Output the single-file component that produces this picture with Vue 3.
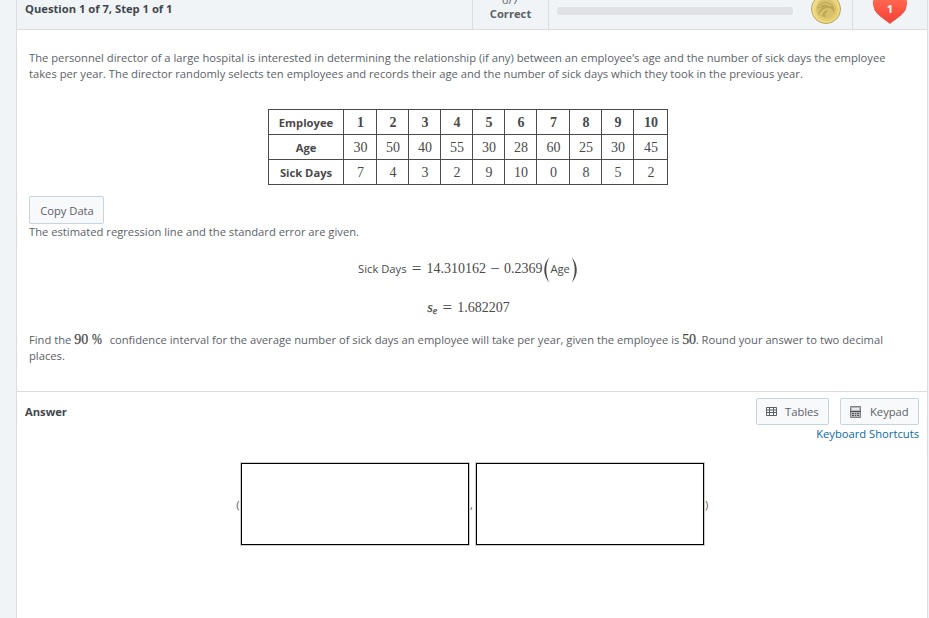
<template>
  <div class="page">
    <main class="panel">
      <header class="top-bar">
        <h1 class="step">Question 1 of 7, Step 1 of 1</h1>
        <div class="score">
          <span>0/7</span>
          <strong>Correct</strong>
        </div>
        <div class="progress">
          <div class="track"></div>
          <svg class="coin" width="32" height="32" viewBox="0 0 32 32">
            <defs>
              <linearGradient id="gold" x1="0" y1="0" x2="1" y2="1">
                <stop offset="0" stop-color="#f0dc96" />
                <stop offset="1" stop-color="#dfc45c" />
              </linearGradient>
            </defs>
            <circle cx="16" cy="16" r="14.5" fill="url(#gold)" stroke="#b7a565" />
            <circle cx="16" cy="16" r="12.9" fill="none" stroke="#f3e08a" stroke-width="1.3" />
            <circle cx="16" cy="15.8" r="10" fill="#d8c16c" />
            <path d="M7 16c2-7 9-9 14-5 3 2 4 5 3 9-1-3-3-5-6-5-5 0-8 4-10 8 0-4 2-7 5-9-2 0-4 1-6 2z" fill="#bda654" />
            <path d="M12 23c1-4 3-6 7-6-2 1-4 3-4 7z" fill="#bda654" />
            <path d="M9 14c3-4 8-4 12-1" fill="none" stroke="#e6d382" />
          </svg>
        </div>
        <div class="lives">
          <svg class="heart" width="36" height="34" viewBox="0 0 36 34">
            <defs>
              <linearGradient id="red" x1="0" y1="0" x2="0" y2="1">
                <stop offset="0" stop-color="#ff7658" />
                <stop offset=".65" stop-color="#fb5140" />
                <stop offset="1" stop-color="#ef3f35" />
              </linearGradient>
            </defs>
            <path d="M18 34C13 29 1 24 1 13 1 5 5 1 10 1c4 0 7 2 8 5 1-3 4-5 8-5 5 0 9 4 9 12 0 11-12 16-17 21z" fill="url(#red)" />
            <path d="M2.5 19c3 6 11 10 15.500 14 4.500-4 12.500-8 15.500-14" fill="none" stroke="#e8554a" />
          </svg>
          <span class="count">1</span>
        </div>
      </header>

      <section class="question">
        <p>The personnel director of a large hospital is interested in determining the relationship (if any) between an employee’s age and the number of sick days the employee<br>takes per year. The director randomly selects ten employees and records their age and the number of sick days which they took in the previous year.</p>

        <table>
          <colgroup>
            <col class="label-col">
            <col v-for="(w, i) in widths" :key="i" :style="{ width: w + 'px' }">
          </colgroup>
          <tbody>
            <tr v-for="(row, r) in rows" :key="row.label" :class="{ head: r === 0 }">
              <th>{{ row.label }}</th>
              <td v-for="(v, i) in row.values" :key="i">{{ v }}</td>
            </tr>
          </tbody>
        </table>

        <button class="btn copy">Copy Data</button>
        <p>The estimated regression line and the standard error are given.</p>

        <div class="equation first">
          <span class="word">Sick Days</span><span class="op">=</span><span>14.310162</span><span class="op minus">−</span><span>0.2369</span>
          <svg class="paren" width="7" height="26" viewBox="0 0 7 26"><path d="M6.500 .3C-.5 7-.5 19 6.500 25.700 2.200 19 2.200 7 6.500 .3z" /></svg>
          <span class="word">Age</span>
          <svg class="paren right" width="7" height="26" viewBox="0 0 7 26"><path d="M.5 .3C7.500 7 7.500 19 .5 25.700 4.800 19 4.800 7 .5 .3z" /></svg>
        </div>
        <div class="equation second">
          <i class="strong">s<sub>e</sub></i><span class="op">=</span><span>1.682207</span>
        </div>

        <p class="prompt">Find the <span class="math strong">90 <span class="percent">%</span></span>&nbsp; confidence interval for the average number of sick days an employee will take per year, given the employee is <span class="math strong fifty">50</span>. Round your answer to two decimal<br>places.</p>
      </section>

      <section class="answer">
        <div class="answer-head">
          <h2>Answer</h2>
          <div class="tools">
            <div class="buttons">
              <button class="btn tables">
                <svg width="11" height="9" viewBox="0 0 11 9">
                  <path d="M.5 .5h10v8H.5zM.5 3h10M.5 5.500h10M3.500 .5v8M7.500 .5v8" fill="none" stroke="#5b6167" />
                </svg>
                Tables
              </button>
              <button class="btn keypad">
                <svg width="11" height="12" viewBox="0 0 11 12">
                  <path d="M.5 .5h10v11H.5z" fill="#b4b8bb" stroke="#7c8185" />
                  <path d="M2 2h7v2H2z" fill="#e8eaec" />
                  <path d="M0 5.500h11M2 7.500h2M5 7.500h1M7 7.500h2M2 9.500h2M5 9.500h1M7 9.500h2" stroke="#4e5358" />
                </svg>
                Keypad
              </button>
            </div>
            <a class="shortcuts">Keyboard Shortcuts</a>
          </div>
        </div>
        <div class="interval">
          <span class="open">(</span>
          <div class="field"></div>
          <span class="comma">,</span>
          <div class="field"></div>
          <span class="close">)</span>
        </div>
      </section>
    </main>
  </div>
</template>

<script setup>
const widths = [33, 32, 32, 32, 32, 32, 33, 32, 32, 34]

const rows = [
  { label: 'Employee', values: [1, 2, 3, 4, 5, 6, 7, 8, 9, 10] },
  { label: 'Age', values: [30, 50, 40, 55, 30, 28, 60, 25, 30, 45] },
  { label: 'Sick Days', values: [7, 4, 3, 2, 9, 10, 0, 8, 5, 2] },
]
</script>

<style>
body{margin:0;overflow:hidden}
</style>

<style scoped>
.page{box-sizing:border-box;width:929px;height:618px;padding:0 1px 0 16px;background:#f0f4f7;font:11.21px/16px "Open Sans",sans-serif;color:#5b6167;overflow:hidden}
.panel{box-sizing:border-box;height:618px;background:#fff;border:solid #dcdcde;border-width:0 1px}
h1,h2,p{margin:0;font-size:11.21px}
.top-bar{display:flex;height:29px;background:#f0f4f7;border-bottom:1px solid #dcdcde;overflow:hidden}
.step{flex:1;padding-left:8px;margin-top:1px;color:#42474c}
.score{box-sizing:border-box;width:76px;display:flex;flex-direction:column;align-items:center;justify-content:flex-end;border-left:1px solid #dcdcde;line-height:14px;padding-bottom:8px}
.progress{box-sizing:border-box;width:305px;display:flex;align-items:flex-start;border:solid #dcdcde;border-width:0 1px;padding-left:8px}
.track{width:236px;height:8px;margin-top:7px;border-radius:3px;background:#e1e2e6}
.coin{margin:-7px 0 0 17px;flex:none}
.lives{position:relative;width:74px}
.heart{display:block;margin:-10px 0 0 19px}
.count{position:absolute;left:0;top:1px;width:74px;text-align:center;color:#fff;font-weight:700}

.question{box-sizing:border-box;height:362px;padding:20px 12px 0;border-bottom:1px solid #dcdcde;white-space:nowrap}
table{width:400px;margin:27px 0 0 239px;border-collapse:collapse;table-layout:fixed;color:#4a4a4a}
.label-col{width:75px}
th,td{box-sizing:border-box;height:25px;padding:0;border:1px solid #4a4a4a;text-align:center}
th{padding:2px 0 0}
td{padding:2px 0 0 1px;font:14px/16px "Liberation Serif",serif}
.head td{font-weight:700}
.btn{box-sizing:border-box;display:flex;align-items:center;border:1px solid #c5d5de;border-radius:2px;background:#f8f9fb;color:#5b6167;font:11.2px/16px "Open Sans",sans-serif;padding:0}
.copy{width:75px;height:28px;margin-top:11px;justify-content:center;padding:2px 0 0 1px}
.equation{display:flex;align-items:center;justify-content:center;height:26px;margin:17px 8px 0 0;font:14px/18px "Liberation Serif",serif;color:#4a4a4a}
.first span{padding-bottom:2px}
.equation .word{font:11.2px/16px "Open Sans",sans-serif}
.op{width:10px;margin:0 5px;font-size:17px;text-align:center}
.minus{margin:0 4px}
.paren{fill:#4a4a4a;margin-left:1px}
.right{margin-left:1px}
.second{height:20px;margin-top:15px;margin-right:7px}
sub{font-size:10px;line-height:0;vertical-align:-2px}
.prompt{margin-top:14px}
.math{font:14px/14px "Liberation Serif",serif;color:#4a4a4a}
.percent{display:inline-block;width:12px;transform:scaleX(.85);transform-origin:left}
.fifty{letter-spacing:-.3px}
.strong{-webkit-text-stroke:.25px #4a4a4a}

.answer-head{display:flex;justify-content:space-between;padding:6px 8px 0}
h2{margin-top:6px;color:#42474c}
.tools{display:flex;flex-direction:column;align-items:flex-end}
.buttons{display:flex;gap:11px}
.tables{width:73px;height:27px;padding-left:9px;gap:8px}
.keypad{width:79px;height:27px;padding-left:9px;gap:9px}
.shortcuts{margin-top:1px;color:#0b6aa9}
.interval{display:flex;align-items:center;margin:20px 0 0 218px;height:84px}
.field{box-sizing:border-box;width:228px;height:82px;border:1px solid #000;box-shadow:0 0 0 1px #ccc;background:#fff}
.open{width:6px;text-align:center;margin-top:2px}
.comma{width:7px;margin-top:2px;text-indent:1px}
.close{margin-top:2px;padding-left:1px}
</style>
